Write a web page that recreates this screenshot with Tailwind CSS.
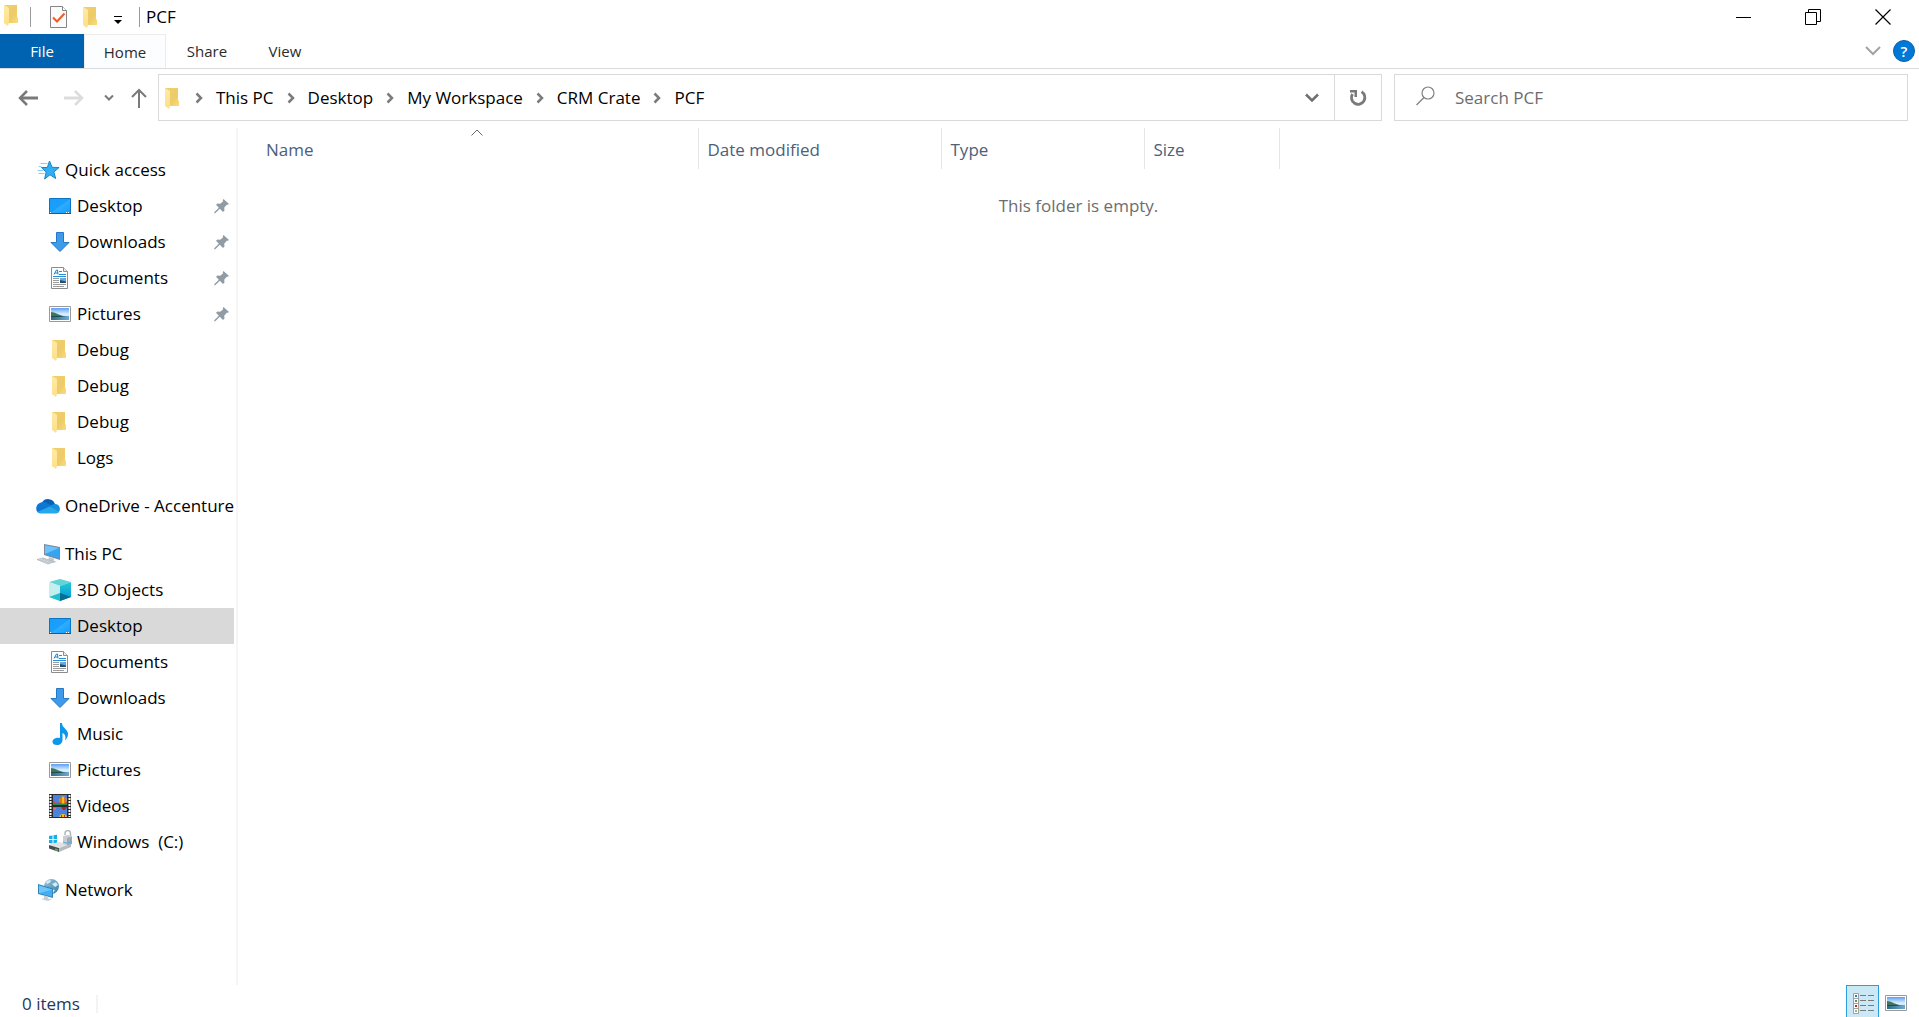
<!DOCTYPE html>
<html lang="en">
<head>
    <meta charset="UTF-8">
    <meta name="viewport" content="width=device-width, initial-scale=1.0">
    <title>PCF</title>
    <script src="https://cdn.jsdelivr.net/npm/@tailwindcss/browser@4"></script>
</head>
<body class="h-screen flex flex-col overflow-hidden bg-white text-black text-[17px] leading-6 font-['Open_Sans','Noto_Sans',sans-serif]">

    <!-- Shared icons -->
    <svg class="absolute w-0 h-0" aria-hidden="true">
        <defs>
            <linearGradient id="gFolder" x1="0" y1="0" x2="1" y2="1"><stop offset="0" stop-color="#f3d06c"/><stop offset=".6" stop-color="#eccb68"/><stop offset="1" stop-color="#fbdc7c"/></linearGradient>
            <linearGradient id="gFlap" x1="0" y1="0" x2="0" y2="1"><stop offset="0" stop-color="#ffeaa6"/><stop offset="1" stop-color="#fddf87"/></linearGradient>
            <linearGradient id="gDesk" x1="0" y1="0" x2="1" y2="1"><stop offset="0" stop-color="#1b9bf8"/><stop offset=".5" stop-color="#18a0ff"/><stop offset=".52" stop-color="#2fadff"/><stop offset="1" stop-color="#149cfb"/></linearGradient>
            <linearGradient id="gSky" x1="0" y1="0" x2="0" y2="1"><stop offset="0" stop-color="#5e9df5"/><stop offset=".5" stop-color="#d9efff"/><stop offset="1" stop-color="#b9dcf5"/></linearGradient>
            <linearGradient id="gSea" x1="0" y1="0" x2="1" y2="0"><stop offset="0" stop-color="#2d6a86"/><stop offset="1" stop-color="#6fa9d3"/></linearGradient>
            <linearGradient id="gCube" x1="0" y1="0" x2="0" y2="1"><stop offset="0" stop-color="#25c9d6"/><stop offset="1" stop-color="#0093d8"/></linearGradient>
            <linearGradient id="gGlobe" x1="0" y1="0" x2="1" y2="1"><stop offset="0" stop-color="#9fc9df"/><stop offset="1" stop-color="#2f7ba6"/></linearGradient>
        </defs>
        <symbol id="folder" viewBox="0 0 24 24">
            <path d="M4 2h13v12l1 1v5H4z" fill="url(#gFolder)"/>
            <path d="M4 2l5 3v15l-1 3-4-3z" fill="url(#gFlap)"/>
        </symbol>
        <symbol id="star" viewBox="0 0 24 24">
            <path d="M13.500 3l2.600 6.300 7 .2-5.300 4.500 1.900 6.500-5.700-3.700-5.400 4.200 1.600-7L5.500 9.500h5.800z" fill="#33adf4" stroke="#1585cb" stroke-width="1"/>
            <path d="M4.500 5.500h7M2.500 8.500h3M1.500 12.500h6M2.500 15.500h6" stroke="#8ecdf2"/>
        </symbol>
        <symbol id="desktop" viewBox="0 0 24 24">
            <path d="M1.500 4.500h21v15h-21z" fill="url(#gDesk)" stroke="#0b74c4"/>
            <path d="M1 19.500h22" stroke="#0d5d9e"/>
            <path d="M2 18.500h1M18 18.500h1M20 18.500h1" stroke="#fff"/>
        </symbol>
        <symbol id="download" viewBox="0 0 24 24">
            <path d="M8.500 2.500h7v10h5.500L12 21.500 3 12.500h5.500z" fill="#3e9bea" stroke="#2478c4"/>
        </symbol>
        <symbol id="document" viewBox="0 0 24 24">
            <path d="M3.500 1.500h12l4 4v17h-16z" fill="#fff" stroke="#8d8d8d"/>
            <path d="M15.500 1.500v4h4" fill="#eee" stroke="#8d8d8d"/>
            <path d="M6 8.500L8.500 4h1l.5 4.500M7 7h3" fill="none" stroke="#1287d4"/>
            <path d="M11 5.500h3M11 8.500h7M5 10.500h13" stroke="#2490d8"/>
            <path d="M5 12.500h6M5 14.500h6M5 16.500h6M5 18.500h13M5 20.500h11" stroke="#9b9b9b"/>
            <path d="M12 12h6v5h-6z" fill="#6ea6dc"/><path d="M12 14l6 1.500V17h-6z" fill="#27506a"/>
        </symbol>
        <symbol id="picture" viewBox="0 0 24 24">
            <path d="M1.500 4.500h21v15h-21z" fill="#fff" stroke="#9a9a9a"/>
            <path d="M3 6h18v12H3z" fill="url(#gSky)"/>
            <path d="M3 10c4 0 7 3 15 4.500H3z" fill="#3f7656"/>
            <path d="M3 14h18v4H3z" fill="url(#gSea)"/><path d="M3 14h9l6 1H3z" fill="#1f4c4c"/>
        </symbol>
        <symbol id="onedrive" viewBox="0 0 24 24">
            <path d="M6 8.500a7.200 7.200 0 0 1 13 1.800l-6 4.700z" fill="#0a5eb5"/>
            <path d="M5.500 8.300c3-.8 5.500.5 8 2.200L17 13 3 19C-1.500 17 -.5 9.500 5.500 8.300z" fill="#0d78d4"/>
            <path d="M13.500 12.500c2-2.300 6.500-3.200 8.500-1.500 2.500 2 2.500 6 0 7.800z" fill="#1490df"/>
            <path d="M1.500 18L13.500 12.500 23 17.500c-.8 1.500-2 2-3.500 2H5c-1.500 0-2.500-.5-3.500-1.500z" fill="#28a8ea"/>
        </symbol>
        <symbol id="pc" viewBox="0 0 24 24">
            <path d="M8 2l16 3v13L8 13z" fill="#7d8a94"/><path d="M9 3.300l14 2.700v10.500L9 12z" fill="#35a5f2"/><path d="M9 3.300l14 2.700-14 6z" fill="#6cc3fa"/>
            <path d="M13 15l5 1.500v2.500l3 .8-3 1-6-2z" fill="#c3cad0"/>
            <path d="M1 17.500l6-1.500 11 3.800-6 2.200z" fill="#dde1e5" stroke="#a3abb3" stroke-width=".7"/>
            <path d="M3.500 17.800l10.500 3.200M6 17l10 3.200" stroke="#a9b0b7" stroke-width=".6"/>
        </symbol>
        <symbol id="cube" viewBox="0 0 24 24">
            <path d="M1 4l11-3 11 3-11 4z" fill="#62d3d6"/>
            <path d="M1 4l11 4v15L1 19z" fill="#c5efee"/>
            <path d="M23 4L12 8v15l11-4z" fill="url(#gCube)"/>
            <path d="M1 19l11-4v8z" fill="#22c0cc"/><path d="M12 15l11 4-11 4z" fill="#066f91"/>
        </symbol>
        <symbol id="music" viewBox="0 0 24 24">
            <path d="M12 1h2c0 5 6 6 6 11 0 3-1.500 5-3 6.500 1-3.500.500-6-2.500-7.500V18c0 3-2.500 5-5.500 5-2.800 0-4.500-1.300-4.500-3.300 0-2.400 2.800-4 5.500-4 .8 0 1.500.100 2 .300z" fill="#0d97ec"/>
        </symbol>
        <symbol id="video" viewBox="0 0 24 24">
            <path d="M1 0h22v24H1z" fill="#2b2b2b"/>
            <path d="M2.500 1v22M21.500 1v22" stroke="#fff" stroke-width="2" stroke-dasharray="2 1"/>
            <path d="M5 1h14v10H5zM5 13h14v10H5z" fill="#4a82dc"/>
            <path d="M5 6l4 3 10-2v4H5z" fill="#d24b52"/><path d="M5 9h14v2H5z" fill="#2f8f52"/>
            <circle cx="15" cy="6" r="3.500" fill="#f3c014"/><path d="M13 3v6M17 3v6" stroke="#d12c2c"/>
            <path d="M13 13h6l-2 3h-2z" fill="#b3262b"/><path d="M5 14h3l-1 2z" fill="#f06c8a"/>
            <path d="M11 23c1-4 7-4 8 0z" fill="#f3c014"/><path d="M13.500 21v2M16.500 21v2" stroke="#d12c2c"/>
        </symbol>
        <symbol id="drive" viewBox="0 0 24 24">
            <path d="M1 6l3.500-.6V9H1zM5.500 5.200L9 4.800V9H5.500zM1 10h3.500v3.500L1 13zM5.500 10H9v4l-3.500-.4z" fill="#12b1ee"/>
            <path d="M1 15l9-3 13 2-9 4z" fill="#dfe2e5"/><path d="M1 15l10 3v4L1 18.500z" fill="#4a4e52"/><path d="M11 18l12-4v3l-12 5z" fill="#b6bbc0"/>
            <path d="M7 19.300l3 .9" stroke="#33d04c" stroke-width="1.500"/>
            <path d="M17 5V3.500c0-4 5.500-4 5.500 0V6" fill="none" stroke="#b0b6ba" stroke-width="1.500"/>
            <path d="M15 6l5-1 4 1.500v7.500l-5 1.500-4-1.500z" fill="#c6ced4"/><path d="M19 8l5-1.500v7.500l-5 1.500z" fill="#9eabb5"/><path d="M15 12l4 1.200 5-1.200" fill="none" stroke="#5da9d4"/>
        </symbol>
        <symbol id="network" viewBox="0 0 24 24">
            <circle cx="15.500" cy="8.500" r="7.500" fill="url(#gGlobe)"/>
            <path d="M10 4c2-2 4-2 5-1.500l-1 2-3 1.500zM16 6l4-2 2 3-3 2zM15 11l4 1-2 3z" fill="#d6ebf3"/>
            <path d="M2 6l15 4.500V20L2 16z" fill="#3386bd"/><path d="M3 7.400l13 4v7.300L3 15.200z" fill="#43aef2"/><path d="M3 7.400l13 4-13 3.800z" fill="#6fc7f8"/>
            <path d="M8 17.500l4 1v2l4 1-4 1.500-7-2 3-.8z" fill="#c8d0d5"/>
        </symbol>
        <symbol id="pin" viewBox="0 0 16 16">
            <path d="M9.500 1l5.500 5-1.500.8-1 .2-2.300 2.800.3 2.700L9 14 5.800 10.800 1.500 15 0 15.500.5 14l4.300-4.200L2 6.700l1.500-1.200 2.700.3L9 3.500l-.2-1.500z" fill="#8f9ba5"/>
        </symbol>
        <symbol id="chev" viewBox="0 0 8 12"><path d="M1.500 1.500L6 6l-4.500 4.500" fill="none" stroke="#7b7b7b" stroke-width="2.500"/></symbol>
    </svg>

    <!-- Title bar -->
    <header class="h-[34px] shrink-0 flex items-start justify-between">
        <div class="flex items-center h-[34px] whitespace-nowrap">
            <svg class="size-6 mb-1"><use href="#folder"/></svg>
            <span class="w-px h-5 bg-[#9a9a9a] ml-1.5 mr-4"></span>
            <button aria-label="Properties" class="size-6">
                <svg class="size-6" viewBox="0 0 24 24"><path d="M3.500 1.500h12l4 4v17h-16z" fill="#fbfbfb" stroke="#858585"/><path d="M15.500 1.500v4h4" fill="#fff" stroke="#858585"/><path d="M6 12.500l4 4 7.500-8" fill="none" stroke="#f15a22" stroke-width="2"/></svg>
            </button>
            <button aria-label="New folder" class="size-6 ml-2"><svg class="size-6"><use href="#folder"/></svg></button>
            <button aria-label="Customize Quick Access Toolbar" class="ml-2.5"><svg class="w-[10px] h-3 mt-1.5" viewBox="0 0 10 12"><path d="M1 2.500h8" stroke="#000"/><path d="M1 6h8L5 10z"/></svg></button>
            <span class="w-px h-5 bg-[#9a9a9a] ml-4 mr-1.5"></span>
            <h1>PCF</h1>
        </div>
        <div class="flex h-[34px] pb-px pr-px">
            <button aria-label="Minimize" class="w-14 flex items-center justify-center"><svg class="w-4 h-4" viewBox="0 0 16 16"><path d="M0 8.500h15" stroke="#000"/></svg></button>
            <button aria-label="Restore" class="w-[70px] ml-1.5 flex items-center justify-center"><svg class="w-4 h-4" viewBox="0 0 16 16" fill="none" stroke="#000"><path d="M.5 3.500h11v12H.5zM3.500 3V.5h12v12H12"/></svg></button>
            <button aria-label="Close" class="w-[70px] flex items-center justify-center"><svg class="w-4 h-4" viewBox="0 0 16 16"><path d="M.5.5l15 15M15.500.5l-15 15" stroke="#000" stroke-width="1.200"/></svg></button>
        </div>
    </header>

    <!-- Ribbon tabs -->
    <nav class="h-[35px] shrink-0 flex border-b border-[#dadbdc] text-[15px] text-[#2b2b2b]">
        <button class="w-[84px] bg-[#0063b1] text-white">File</button>
        <button class="w-[82px] border border-b-0 border-[#ececec] bg-[#fcfdff]">Home</button>
        <button class="w-[82px]">Share</button>
        <button class="w-[74px]">View</button>
        <div class="ml-auto flex items-center gap-3 pr-1">
            <button aria-label="Expand the Ribbon"><svg class="w-4 h-2.5" viewBox="0 0 16 10"><path d="M1 1l7 7 7-7" fill="none" stroke="#a3a3a3" stroke-width="2"/></svg></button>
            <button aria-label="Help" class="size-[22px] rounded-full bg-[#0078d7] border border-[#0a5ea8] text-white text-[15px] leading-5 font-semibold">?</button>
        </div>
    </nav>

    <!-- Navigation and address -->
    <div class="h-[59px] shrink-0 flex items-start pt-[5px] pr-[11px]">
        <div class="w-[158px] h-12 flex items-center pl-[18px]">
            <button aria-label="Back"><svg class="w-5 h-4" viewBox="0 0 20 16" fill="none" stroke="#7a7a7a"><path d="M2 8h18" stroke-width="3"/><path d="M9 1L2 8l7 7" stroke-width="2.500"/></svg></button>
            <button aria-label="Forward" class="ml-[26px]" disabled><svg class="w-5 h-4" viewBox="0 0 20 16" fill="none" stroke="#dcdcdc"><path d="M0 8h18" stroke-width="3"/><path d="M11 1l7 7-7 7" stroke-width="2.500"/></svg></button>
            <button aria-label="Recent locations" class="ml-5"><svg class="w-2.5 h-2" viewBox="0 0 10 8"><path d="M1 1.500l4 4 4-4" fill="none" stroke="#7a7a7a" stroke-width="2"/></svg></button>
            <button aria-label="Up" class="ml-[17px]"><svg class="w-4 h-5" viewBox="0 0 16 20" fill="none" stroke="#7a7a7a" stroke-width="2"><path d="M8 20V2M1 9l7-7 7 7"/></svg></button>
        </div>
        <div class="h-[47px] grow flex items-center border border-[#d9d9d9]">
            <svg class="size-6 ml-0.5 mr-2.5"><use href="#folder"/></svg>
            <div class="flex items-center gap-[13px] whitespace-nowrap">
                <svg class="w-2 h-3"><use href="#chev"/></svg>
                <a href="#">This PC</a>
                <svg class="w-2 h-3"><use href="#chev"/></svg>
                <a href="#">Desktop</a>
                <svg class="w-2 h-3"><use href="#chev"/></svg>
                <a href="#">My Workspace</a>
                <svg class="w-2 h-3"><use href="#chev"/></svg>
                <a href="#">CRM Crate</a>
                <svg class="w-2 h-3"><use href="#chev"/></svg>
                <a href="#">PCF</a>
            </div>
            <button aria-label="Previous locations" class="ml-auto mr-[15px]"><svg class="w-3.5 h-2.5" viewBox="0 0 14 10"><path d="M1 1.500l6 6 6-6" fill="none" stroke="#707070" stroke-width="2.500"/></svg></button>
            <button aria-label="Refresh" class="w-[47px] self-stretch border-l border-[#d9d9d9] flex items-center justify-center"><svg class="w-[18px] h-[18px]" viewBox="0 0 18 18"><path d="M12.500 2.800A6.700 6.700 0 1 1 3.500 5" fill="none" stroke="#7a7a7a" stroke-width="2.800"/><path d="M1 1h7v7H5.500V3.500H1z" fill="#7a7a7a"/></svg></button>
        </div>
        <label class="w-[27%] max-w-[514px] h-[47px] ml-3 flex items-center border border-[#d9d9d9] pl-5">
            <svg class="w-5 h-5 mb-1 mr-5 shrink-0" viewBox="0 0 20 20" fill="none" stroke="#808080" stroke-width="1.200"><circle cx="13" cy="7" r="6"/><path d="M9 11.500L1.500 19"/></svg>
            <input type="text" aria-label="Search PCF" placeholder="Search PCF" class="grow min-w-0 outline-none placeholder:text-[#6d6d6d]">
        </label>
    </div>

    <div class="grow min-h-0 flex">
        <!-- Navigation pane -->
        <aside class="w-[238px] shrink-0 border-r-2 border-[#f5f5f5] pt-6 pr-0.5 whitespace-nowrap">
            <ul>
                <li><a href="#" class="h-9 flex items-center gap-[5px] pl-9"><svg class="size-6"><use href="#star"/></svg>Quick access</a></li>
                <li><a href="#" class="h-9 flex items-center gap-[5px] pl-12"><svg class="size-6"><use href="#desktop"/></svg>Desktop<svg class="size-4 ml-auto mr-1"><use href="#pin"/></svg></a></li>
                <li><a href="#" class="h-9 flex items-center gap-[5px] pl-12"><svg class="size-6"><use href="#download"/></svg>Downloads<svg class="size-4 ml-auto mr-1"><use href="#pin"/></svg></a></li>
                <li><a href="#" class="h-9 flex items-center gap-[5px] pl-12"><svg class="size-6"><use href="#document"/></svg>Documents<svg class="size-4 ml-auto mr-1"><use href="#pin"/></svg></a></li>
                <li><a href="#" class="h-9 flex items-center gap-[5px] pl-12"><svg class="size-6"><use href="#picture"/></svg>Pictures<svg class="size-4 ml-auto mr-1"><use href="#pin"/></svg></a></li>
                <li><a href="#" class="h-9 flex items-center gap-[5px] pl-12"><svg class="size-6"><use href="#folder"/></svg>Debug</a></li>
                <li><a href="#" class="h-9 flex items-center gap-[5px] pl-12"><svg class="size-6"><use href="#folder"/></svg>Debug</a></li>
                <li><a href="#" class="h-9 flex items-center gap-[5px] pl-12"><svg class="size-6"><use href="#folder"/></svg>Debug</a></li>
                <li><a href="#" class="h-9 flex items-center gap-[5px] pl-12"><svg class="size-6"><use href="#folder"/></svg>Logs</a></li>
            </ul>
            <ul class="mt-3">
                <li><a href="#" class="h-9 flex items-center gap-[5px] pl-9"><svg class="size-6 shrink-0"><use href="#onedrive"/></svg>OneDrive - Accenture</a></li>
            </ul>
            <ul class="mt-3">
                <li><a href="#" class="h-9 flex items-center gap-[5px] pl-9"><svg class="size-6"><use href="#pc"/></svg>This PC</a></li>
                <li><a href="#" class="h-9 flex items-center gap-[5px] pl-12"><svg class="size-6"><use href="#cube"/></svg>3D Objects</a></li>
                <li><a href="#" class="h-9 flex items-center gap-[5px] pl-12 bg-[#d9d9d9]" aria-current="true"><svg class="size-6"><use href="#desktop"/></svg>Desktop</a></li>
                <li><a href="#" class="h-9 flex items-center gap-[5px] pl-12"><svg class="size-6"><use href="#document"/></svg>Documents</a></li>
                <li><a href="#" class="h-9 flex items-center gap-[5px] pl-12"><svg class="size-6"><use href="#download"/></svg>Downloads</a></li>
                <li><a href="#" class="h-9 flex items-center gap-[5px] pl-12"><svg class="size-6"><use href="#music"/></svg>Music</a></li>
                <li><a href="#" class="h-9 flex items-center gap-[5px] pl-12"><svg class="size-6"><use href="#picture"/></svg>Pictures</a></li>
                <li><a href="#" class="h-9 flex items-center gap-[5px] pl-12"><svg class="size-6"><use href="#video"/></svg>Videos</a></li>
                <li><a href="#" class="h-9 flex items-center gap-[5px] pl-12"><svg class="size-6"><use href="#drive"/></svg>Windows&nbsp; (C:)</a></li>
            </ul>
            <ul class="mt-3">
                <li><a href="#" class="h-9 flex items-center gap-[5px] pl-9"><svg class="size-6"><use href="#network"/></svg>Network</a></li>
            </ul>
        </aside>

        <!-- File list -->
        <main class="grow min-w-0">
            <table class="ml-[18px] table-fixed w-[1023px] text-left text-[#4c607a]">
                <thead>
                    <tr class="h-[41px]">
                        <th class="relative w-[442px] pl-2.5 pt-0.5 font-normal border-r border-[#e5e5e5]">Name
                            <svg class="absolute top-px left-1/2 -translate-x-1/2 w-3 h-[7px]" viewBox="0 0 12 7"><path d="M.5 6.500L6 1l5.500 5.500" fill="none" stroke="#6b6b6b"/></svg>
                        </th>
                        <th class="w-[243px] pl-[9px] pt-0.5 font-normal border-r border-[#e5e5e5]">Date modified</th>
                        <th class="w-[203px] pl-[9px] pt-0.5 font-normal border-r border-[#e5e5e5]">Type</th>
                        <th class="w-[135px] pl-[9px] pt-0.5 font-normal border-r border-[#e5e5e5]">Size</th>
                    </tr>
                </thead>
            </table>
            <p class="mt-[25px] text-center text-[#6d6d6d]">This folder is empty.</p>
        </main>
    </div>

    <!-- Status bar -->
    <footer class="h-8 shrink-0 flex items-start">
        <div class="flex items-center h-8 pt-1.5 pl-[22px] text-[#1e395b]">0 items<span class="w-0.5 h-[18px] bg-[#f3f3f3] ml-4"></span></div>
        <div class="ml-auto flex h-8 pr-[11px]">
            <button aria-label="Details view" class="w-[33px] h-8 border border-b-0 border-[#2a9fdc] bg-[#cbe8f6] flex justify-center">
                <svg class="w-[22px] h-[22px] mt-[7px]" viewBox="0 0 22 22">
                    <path d="M1.500.5h5v20h-5zM1.500 5.500h5M1.500 10.500h5M1.500 15.500h5" fill="#fff" stroke="#a0a0a0"/>
                    <path d="M3 2h2v2H3z" fill="#2e7fb8"/><path d="M3 7h2v2H3z" fill="#6d8a55"/><path d="M3 12h2v2H3z" fill="#c02b1c"/><path d="M3 17h2v2H3z" fill="#8fbc78"/>
                    <path d="M8 2.500h6M16 2.500h6M8 7.500h6M16 7.500h6M8 12.500h6M16 12.500h6M8 17.500h6M16 17.500h6" stroke="#7a7a7a"/>
                </svg>
            </button>
            <button aria-label="Large thumbnails view" class="ml-[5px] pt-1"><svg class="size-6"><use href="#picture"/></svg></button>
        </div>
    </footer>
</body>
</html>
